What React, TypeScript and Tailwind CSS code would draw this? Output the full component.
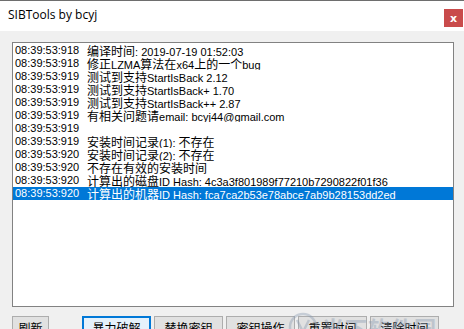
import React from "react";

const rows: [string, string][] = [
  ["08:39:53:918", "编译时间: 2019-07-19 01:52:03"],
  ["08:39:53:918", "修正LZMA算法在x64上的一个bug"],
  ["08:39:53:919", "测试到支持StartIsBack 2.12"],
  ["08:39:53:919", "测试到支持StartIsBack+ 1.70"],
  ["08:39:53:919", "测试到支持StartIsBack++ 2.87"],
  ["08:39:53:919", "有相关问题请email: bcyj44@gmail.com"],
  ["08:39:53:919", ""],
  ["08:39:53:919", "安装时间记录(1): 不存在"],
  ["08:39:53:920", "安装时间记录(2): 不存在"],
  ["08:39:53:920", "不存在有效的安装时间"],
  ["08:39:53:920", "计算出的磁盘ID Hash: 4c3a3f801989f77210b7290822f01f36"],
  ["08:39:53:920", "计算出的机器ID Hash: fca7ca2b53e78abce7ab9b28153dd2ed"],
];

function Mixed({ text }: { text: string }) {
  const parts = text.split(/([\u3000-\u9fff\uff00-\uffef]+)/);
  return (
    <>
      {parts.map((p, i) =>
        /[\u3000-\u9fff\uff00-\uffef]/.test(p) ? (
          <span key={i} className="font-['Noto_Sans_CJK_SC',sans-serif] text-[12px] leading-[13px]">
            {p}
          </span>
        ) : (
          <span key={i} className="whitespace-pre">{p}</span>
        )
      )}
    </>
  );
}

const buttons = ["暴力破解", "替换密钥", "密钥操作", "重置时间", "清除时间"];

export default function App() {
  return (
    <div className="relative w-[464px] h-[329px] overflow-hidden bg-[#f0f0f0] border-t border-[#6e6e6e] font-['Liberation_Sans','Noto_Sans_CJK_SC',sans-serif]">
      {/* title bar */}
      <div className="h-[30px] bg-white flex items-start justify-between">
        <div className="pl-[8px] pt-[5px] text-[12px] leading-[18px] text-black font-['Open_Sans','Noto_Sans_CJK_SC',sans-serif]">
          SIBTools by bcyj
        </div>
        <div className="mt-[8px] mr-[1px] w-[19px] h-[18px] bg-[#c94b4b] flex items-center justify-center text-white text-[11px] font-bold leading-none font-['DejaVu_Sans',sans-serif]">
          x
        </div>
      </div>

      {/* list box */}
      <div className="ml-[12px] mt-[11px] w-[442px] h-[265px] border border-[#828282] bg-white pt-[1px] text-[11px] text-black">
        {rows.map(([t, s], i) => {
          const sel = i === rows.length - 1;
          return (
            <div
              key={i}
              className={
                sel
                  ? "h-[13px] leading-[13px] pl-[2px] flex whitespace-nowrap overflow-hidden bg-[#0078d7] text-white"
                  : "h-[13px] leading-[13px] pl-[2px] flex whitespace-nowrap overflow-hidden"
              }
            >
              <span className="w-[72px] shrink-0">{t}</span>
              <span className="whitespace-pre">
                <Mixed text={s} />
              </span>
            </div>
          );
        })}
      </div>

      {/* buttons */}
      <div className="flex mt-[9px] ml-[12px] font-['Noto_Sans_CJK_SC',sans-serif] text-[12px] text-black">
        <div className="w-[37px] h-[23px] border border-[#adadad] bg-[#e1e1e1] flex items-center justify-center">
          刷新
        </div>
        <div className="ml-[33px] flex gap-[3px]">
          {buttons.map((b, i) => (
            <div
              key={b}
              className={
                i === 0
                  ? "w-[69px] h-[23px] border-2 border-[#0078d7] bg-[#e5f1fb] flex items-center justify-center"
                  : "w-[69px] h-[23px] border border-[#adadad] bg-[#e1e1e1] flex items-center justify-center"
              }
            >
              {b}
            </div>
          ))}
        </div>
      </div>

      {/* watermark */}
      <div className="absolute left-[288px] top-[311px] flex items-center gap-[4px] opacity-40 pointer-events-none">
        <svg width="30" height="30" viewBox="0 0 30 30">
          <circle cx="15" cy="15" r="13" fill="none" stroke="#8a9bb0" strokeWidth="2.5" />
          <path d="M9 8 L15 20 L21 8" fill="none" stroke="#8a9bb0" strokeWidth="2.5" />
        </svg>
        <span className="text-[22px] leading-[30px] tracking-[1px] text-[#8a9bb0] font-['Noto_Sans_CJK_SC',sans-serif] font-bold">
          当下软件园
        </span>
      </div>
    </div>
  );
}
